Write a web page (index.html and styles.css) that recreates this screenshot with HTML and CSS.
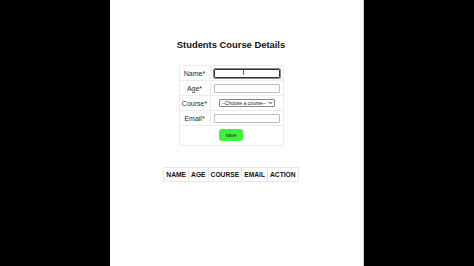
FILE: index.html
```html
<!DOCTYPE html>
<html>
<head>
<meta charset="utf-8">
<link rel="stylesheet" href="styles.css">
</head>
<body>
<div class="stage">
  <div class="page">
    <div class="content">
      <h1 class="title">Students Course Details</h1>
      <table class="form-table">
        <tr>
          <td class="label">Name*</td>
          <td class="field"><input class="text-input focused" type="text"><span class="cursor"></span></td>
        </tr>
        <tr>
          <td class="label">Age*</td>
          <td class="field"><input class="text-input" type="text"></td>
        </tr>
        <tr>
          <td class="label">Course*</td>
          <td class="field">
            <div class="select-wrap">
              <select class="select"><option>--Choose a course--</option></select>
              <svg class="chevron" width="5" height="4" viewBox="0 0 5 4"><path d="M0.6 0.8 L2.5 2.8 L4.4 0.8" fill="none" stroke="#333" stroke-width="0.9"/></svg>
            </div>
          </td>
        </tr>
        <tr>
          <td class="label">Email*</td>
          <td class="field"><input class="text-input" type="text"></td>
        </tr>
        <tr>
          <td class="save-cell" colspan="2"><button class="save">save</button></td>
        </tr>
      </table>
      <table class="list-table">
        <tr>
          <th>NAME</th>
          <th>AGE</th>
          <th>COURSE</th>
          <th>EMAIL</th>
          <th>ACTION</th>
        </tr>
      </table>
    </div>
    <div class="scrollbar"></div>
  </div>
</div>
</body>
</html>
```

FILE: styles.css
```css
html, body {
  margin: 0;
  padding: 0;
  background: #000;
  height: 100%;
}
.stage {
  display: flex;
  justify-content: center;
  height: 266px;
}
.page {
  width: 254px;
  height: 266px;
  background: #fff;
  display: flex;
  font-family: "Liberation Sans", Arial, sans-serif;
  color: #111;
}
.content {
  flex: 1;
  display: flex;
  flex-direction: column;
  align-items: center;
  padding-top: 38px;
}
.scrollbar {
  width: 11px;
  background: #fff;
  border-right: 1px solid #cfcfcf;
}
.title {
  margin: 0;
  font-size: 9.4px;
  line-height: 13px;
  font-weight: bold;
  color: #111;
}
.form-table {
  margin-top: 14px;
  border-collapse: collapse;
  border: 1px solid #e8e8e8;
}
.form-table td {
  border: 1px solid #ececec;
  padding: 0;
  height: 14px;
  font-size: 7px;
}
.label {
  width: 30px;
  text-align: center;
  color: #2a2a2a;
}
.field {
  width: 72px;
  position: relative;
}
.text-input {
  box-sizing: border-box;
  width: 66px;
  height: 9px;
  margin: 0 0 0 3px;
  padding: 0;
  border: 1px solid #bdbdbd;
  border-radius: 1px;
  display: block;
}
.text-input.focused {
  border: 1px solid #333;
  outline: 1px solid #888;
}
.cursor {
  position: absolute;
  left: 32px;
  top: 4px;
  width: 1px;
  height: 5px;
  background: #666;
}
.select-wrap {
  position: relative;
  width: 56px;
  height: 8px;
  margin-left: 8px;
}
.select {
  -webkit-appearance: none;
  appearance: none;
  box-sizing: border-box;
  width: 56px;
  height: 8px;
  font-size: 5px;
  line-height: 6px;
  padding: 0 0 0 2px;
  margin: 0;
  border: 1px solid #888;
  border-radius: 1px;
  background: #fff;
  color: #222;
  font-family: "Liberation Sans", Arial, sans-serif;
  display: block;
}
.chevron {
  position: absolute;
  right: 2px;
  top: 2px;
}
.save-cell {
  height: 17px !important;
  text-align: center;
  padding-bottom: 2px !important;
}
.save {
  width: 24px;
  height: 12px;
  padding: 0;
  border: none;
  border-radius: 3px;
  background: #3cf23c;
  font-size: 5px;
  color: #222;
  font-family: "Liberation Sans", Arial, sans-serif;
}
.list-table {
  margin-top: 21px;
  border-collapse: collapse;
  border: 1px solid #e6e6e6;
}
.list-table th {
  border: 1px solid #e6e6e6;
  font-size: 6.7px;
  font-weight: bold;
  height: 13px;
  padding: 0 2px;
  color: #111;
}
```
